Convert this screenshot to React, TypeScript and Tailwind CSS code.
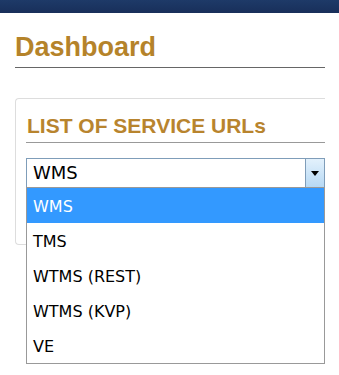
import { type FC } from 'react';

const options = ['WMS', 'TMS', 'WTMS (REST)', 'WTMS (KVP)', 'VE'];

const ServiceSelect: FC = () => (
  <div className="relative mt-[15px]">
    <div className="flex h-[30px] items-stretch border border-[#7f9db9] bg-white">
      <span className="flex-1 pl-[6px] text-[18px] leading-[28px] text-black [font-family:'DejaVu_Sans',Verdana,sans-serif]">
        WMS
      </span>
      <span className="flex w-[19px] items-center justify-center border-l border-[#7f9db9] bg-gradient-to-b from-[#e3f1fc] to-[#b7d9f4]">
        <svg width="8" height="5" viewBox="0 0 8 5">
          <path d="M0 0h8L4 5z" fill="#000" />
        </svg>
      </span>
    </div>
    <ul className="absolute top-[29px] left-0 z-10 w-full border border-[#999] bg-white">
      {options.map((opt, i) => (
        <li
          key={opt}
          className={
            i === 0
              ? 'h-[35px] bg-[#3399ff] pl-[6px] text-[16px] leading-[38px] text-white [font-family:"DejaVu_Sans",Verdana,sans-serif]'
              : 'h-[35px] pl-[6px] text-[16px] leading-[38px] text-black [font-family:"DejaVu_Sans",Verdana,sans-serif]'
          }
        >
          {opt}
        </li>
      ))}
    </ul>
  </div>
);

export default function App() {
  return (
    <div className="min-h-[375px] w-[339px] bg-white [font-family:'Liberation_Sans',Arial,sans-serif]">
      <div className="h-[13px] bg-gradient-to-b from-[#1e3a68] to-[#182f5a]" />
      <div className="px-[15px]">
        <h1 className="mt-[21px] w-[310px] border-b border-[#666] pb-[6px] text-[27px] leading-[27px] font-bold text-[#b5832a]">
          Dashboard
        </h1>
        <section className="mt-[30px] w-[310px] rounded-l-[4px] border border-r-0 border-[#dddddd] pt-[16px] pb-[56px] pl-[10px]">
          <h2 className="border-b border-[#999] pb-[6px] pl-[1px] text-[21px] leading-[21px] font-bold text-[#b8842e]">
            LIST OF SERVICE URLs
          </h2>
          <ServiceSelect />
        </section>
      </div>
    </div>
  );
}
